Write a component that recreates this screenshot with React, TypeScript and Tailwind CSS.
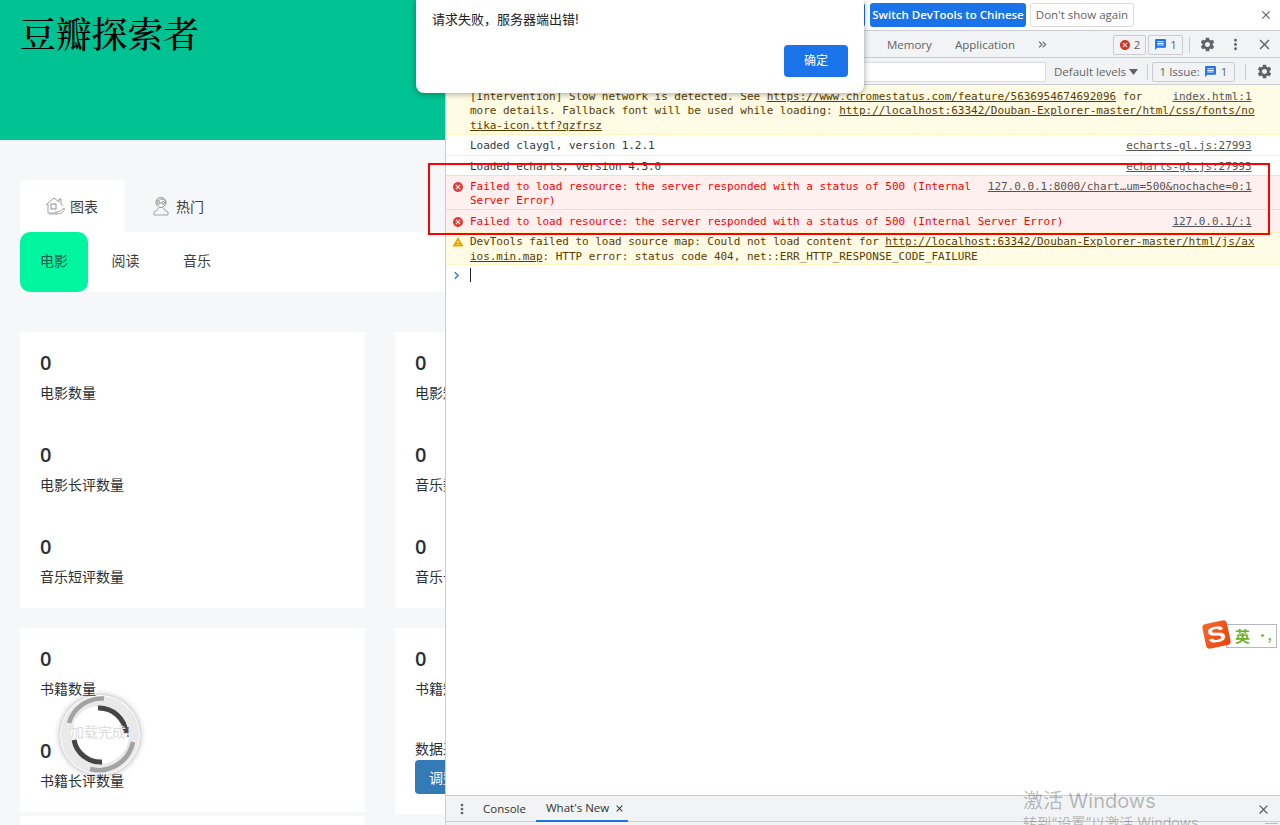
import React from "react";
import { MdSettings, MdMoreVert, MdClose, MdMessage, MdCancel, MdWarning, MdChevronRight, MdKeyboardDoubleArrowRight } from "react-icons/md";

function Stat({ label, className = "" }: { label: string; className?: string }) {
  return (
    <div className={`h-[92px] ${className}`}>
      <div className="h-[30px] font-['Open_Sans',sans-serif] text-[20px] leading-[30px] font-semibold text-[#2b2f36]">0</div>
      <div className="mt-[5px] h-[20px] text-[14px] leading-[20px] text-[#2b2f36] whitespace-nowrap">{label}</div>
    </div>
  );
}

function Line({ icon, children, right }: { icon?: React.ReactNode; children: React.ReactNode; right?: React.ReactNode }) {
  return (
    <div className="flex h-[14.5px] items-center leading-[14.5px] whitespace-pre">
      <div className="flex w-[24px] shrink-0 pl-[6px]">{icon}</div>
      <div className="flex-1 overflow-visible">{children}</div>
      {right && <a className="shrink-0 underline text-[#545454]">{right}</a>}
    </div>
  );
}

function HouseIcon() {
  return (
    <svg width="22" height="20" viewBox="0 0 22 20" fill="none" strokeWidth="1" className="shrink-0">
      <path d="M2 9 L10 2 L15 6 V3 H17 V8 L19 10" stroke="#a89a88" />
      <path d="M4 8 V17 H14" stroke="#9aa3ad" />
      <rect x="7" y="8" width="5" height="5" stroke="#8a8f96" />
      <path d="M11 16 C14 16 18 15 20 12 C21 15 18 18 13 18 H5" stroke="#b8a48e" />
    </svg>
  );
}

function PersonIcon() {
  return (
    <svg width="18" height="20" viewBox="0 0 18 20" fill="none" strokeWidth="1" className="shrink-0">
      <circle cx="9" cy="6.5" r="5" stroke="#8f949a" />
      <path d="M4 5 C7 5 8 3 10 3 C12 3 14 5 14 7" stroke="#a8977f" />
      <circle cx="6.8" cy="7" r="1.4" stroke="#8f949a" />
      <circle cx="11.2" cy="7" r="1.4" stroke="#8f949a" />
      <path d="M6 12 V13.5 L2 16 V19 H16 V16 L12 13.5 V12" stroke="#9aa3ad" />
    </svg>
  );
}

function Spinner() {
  return (
    <div className="absolute left-[60px] top-[695px] h-[80px] w-[80px] rounded-full shadow-[0_0_6px_rgba(0,0,0,0.35)]">
      <svg width="80" height="80" viewBox="0 0 80 80" fill="none" className="absolute inset-0">
        <circle cx="40" cy="40" r="34" stroke="#e9e9e9" strokeWidth="10" fill="#fff" />
        <path d="M9 28 A34 34 0 0 1 44 3.5" stroke="#a3a3a3" strokeWidth="4.5" />
        <path d="M73 47 A35 35 0 0 1 30 74" stroke="#a3a3a3" strokeWidth="4.5" />
        <path d="M38 13 A27 27 0 0 1 66 38" stroke="#444" strokeWidth="5" />
        <path d="M14 45 A27 27 0 0 0 42 67" stroke="#444" strokeWidth="5" />
      </svg>
      <div className="absolute left-[10px] top-[27px] text-[14px] leading-[20px] whitespace-nowrap text-[#dcdcdc]">
        加载完成<span className="text-[#555]">!</span>
      </div>
    </div>
  );
}

export default function App() {
  return (
    <div className="relative flex h-[825px] w-[1280px] overflow-hidden bg-white font-['Open_Sans','Noto_Sans_CJK_SC',sans-serif]">
      {/* Page */}
      <div className="h-[825px] w-[445px] shrink-0 overflow-hidden bg-[#f6f7f9] font-['Inter','Noto_Sans_CJK_SC',sans-serif]">
        <div className="h-[140px] bg-[#00c292] pl-[20px] pt-[7px]">
          <h1 className="text-[35.8px] leading-[52px] font-medium text-black whitespace-nowrap font-['Noto_Serif_CJK_SC','Noto_Sans_CJK_SC',serif]">豆瓣探索者</h1>
        </div>
        <div className="w-[770px] pl-[20px] pt-[40px]">
          <div className="flex h-[52px] text-[14px] text-[#3b3f45]">
            <div className="flex w-[105px] items-center gap-[4px] rounded-t-[4px] bg-white pl-[24px]">
              <HouseIcon />
              <span>图表</span>
            </div>
            <div className="flex w-[105px] items-center gap-[6px] pl-[27px]">
              <PersonIcon />
              <span>热门</span>
            </div>
          </div>
          <div className="flex h-[60px] w-[425px] items-center bg-white text-[14px] text-[#3b3f45]">
            <div className="flex h-[60px] w-[68px] items-center justify-center rounded-[10px] bg-[#00f5a0] pb-[3px] text-[#1f5c48]">电影</div>
            <div className="flex w-[75px] justify-center pb-[3px]">阅读</div>
            <div className="flex w-[68px] justify-center pb-[3px]">音乐</div>
          </div>
          <div className="mt-[40px] grid grid-cols-[345px_345px] gap-x-[30px]">
            <div className="h-[276px] bg-white px-[20px] pt-[16px]">
              <Stat label="电影数量" />
              <Stat label="电影长评数量" />
              <Stat label="音乐短评数量" />
            </div>
            <div className="h-[276px] bg-white px-[20px] pt-[16px]">
              <Stat label="电影短评数量" />
              <Stat label="音乐数量" />
              <Stat label="音乐长评数量" />
            </div>
            <div className="mt-[20px] h-[184px] bg-white px-[20px] pt-[16px]">
              <Stat label="书籍数量" />
              <Stat label="书籍长评数量" />
            </div>
            <div className="mt-[20px] h-[186px] bg-white px-[20px] pt-[16px]">
              <Stat label="书籍短评数量" className="h-[95px]" />
              <div className="h-[20px] text-[14px] leading-[20px] text-[#2b2f36] whitespace-nowrap">数据采集完成</div>
              <div className="mt-[1px] flex h-[34px] w-[80px] items-center rounded-[4px] bg-[#337ab7] pl-[14px] text-[14px] text-white">调整</div>
            </div>
            <div className="mt-[2px] h-[40px] bg-white" />
          </div>
        </div>
      </div>

      {/* DevTools */}
      <div className="flex h-[825px] flex-1 flex-col border-l border-[#c9ccd1] bg-white text-[11.5px] text-[#5f6368]">
        <div className="flex h-[31px] shrink-0 items-center border-b border-[#cbcdd1] bg-white">
          <div className="ml-[150px] h-[24px] w-[269px] rounded-[3px] bg-[#1a73e8]" />
          <div className="ml-[5px] flex h-[24px] w-[156px] items-center justify-center rounded-[3px] bg-[#1a73e8] font-semibold text-white whitespace-nowrap">Switch DevTools to Chinese</div>
          <div className="ml-[4px] flex h-[24px] w-[104px] items-center justify-center rounded-[3px] border border-[#dadce0] text-[#5f6368] whitespace-nowrap">Don't show again</div>
          <MdClose className="ml-[125px] text-[#5f6368]" size={14} />
        </div>
        <div className="flex h-[27px] shrink-0 items-center border-b border-[#cbcdd1] bg-[#f1f3f4] pt-[1px]">
          <span className="ml-[441px] w-[45px]">Memory</span>
          <span className="ml-[23px] w-[61px] whitespace-nowrap">Application</span>
          <MdKeyboardDoubleArrowRight className="ml-[20px]" size={13} />
          <div className="ml-[64px] flex h-[20px] w-[33px] items-center justify-center gap-[3px] border border-[#c9ccd1] rounded-[2px]">
            <MdCancel className="text-[#d93025]" size={12} />
            <span>2</span>
          </div>
          <div className="ml-[2px] flex h-[20px] w-[35px] items-center justify-center gap-[3px] border border-[#c9ccd1] rounded-[2px]">
            <MdMessage className="text-[#1a73e8]" size={13} />
            <span>1</span>
          </div>
          <div className="ml-[6px] h-[16px] w-px bg-[#c9ccd1]" />
          <MdSettings className="ml-[9px]" size={17} />
          <MdMoreVert className="ml-[11px]" size={17} />
          <MdClose className="ml-[12px]" size={17} />
        </div>
        <div className="flex h-[27px] shrink-0 items-center border-b border-[#cbcdd1] bg-[#f1f3f4] pt-[1px]">
          <div className="h-[20px] w-[600px] border border-[#dadce0] bg-white" />
          <span className="ml-[8px] w-[71px] whitespace-nowrap">Default levels</span>
          <svg width="9" height="6" viewBox="0 0 9 6" className="ml-[4px] shrink-0"><path d="M0 0 H9 L4.5 6 Z" fill="#5f6368" /></svg>
          <div className="ml-[9px] h-[16px] w-px bg-[#c9ccd1]" />
          <div className="ml-[4px] flex h-[20px] w-[83px] items-center justify-center gap-[4px] border border-[#c9ccd1] rounded-[2px] whitespace-nowrap">
            <span>1 Issue:</span>
            <MdMessage className="text-[#1a73e8]" size={13} />
            <span>1</span>
          </div>
          <div className="ml-[10px] h-[16px] w-px bg-[#c9ccd1]" />
          <MdSettings className="ml-[10px]" size={17} />
        </div>

        <div className="flex-1 overflow-hidden font-['DejaVu_Sans_Mono',monospace] text-[11px] tracking-[-0.03px] text-[#303942]">
          <div className="relative flex h-[50px] flex-col justify-center border-b border-[#fff5c2] bg-[#fffbe5] pr-[29px] pt-[4px] text-[#5c3c00]">
            <Line right={<span className="mr-[3px]">index.html:1</span>}>
              <span>[Intervention] Slow network is detected. See <u>https://www.chromestatus.com/feature/5636954674692096</u> for</span>
            </Line>
            <Line>
              <span>more details. Fallback font will be used while loading: <u>http://localhost:63342/Douban-Explorer-master/html/css/fonts/no</u></span>
            </Line>
            <Line>
              <u>tika-icon.ttf?qzfrsz</u>
            </Line>
            <div className="absolute left-0 right-0 top-0 h-[6px] bg-[#fffbe5]" />
          </div>
          <div className="flex h-[21px] flex-col justify-center border-b border-[#f0f0f0] pr-[32px] pt-[2px]">
            <Line right="echarts-gl.js:27993">Loaded claygl, version 1.2.1</Line>
          </div>
          <div className="flex h-[19px] flex-col justify-center pr-[32px] pt-[4px]">
            <Line right="echarts-gl.js:27993">Loaded echarts, version 4.3.0</Line>
          </div>
          <div className="flex h-[35px] flex-col justify-center border-y border-[#ffd6d6] bg-[#fff0f0] pr-[32px] pt-[3px] text-[#ff0000]">
            <Line icon={<MdCancel className="text-[#e0403a]" size={12} />} right="127.0.0.1:8000/chart…um=500&nochache=0:1">
              Failed to load resource: the server responded with a status of 500 (Internal
            </Line>
            <Line>Server Error)</Line>
          </div>
          <div className="flex h-[22px] flex-col justify-center bg-[#fff0f0] pr-[32px] pt-[2px] text-[#ff0000]">
            <Line icon={<MdCancel className="text-[#e0403a]" size={12} />} right="127.0.0.1/:1">
              Failed to load resource: the server responded with a status of 500 (Internal Server Error)
            </Line>
          </div>
          <div className="flex h-[33px] flex-col justify-center border-y border-[#fff5c2] bg-[#fffbe5] pr-[29px] pt-[2px] text-[#5c3c00]">
            <Line icon={<MdWarning className="text-[#e6a700]" size={12} />}>
              <span>DevTools failed to load source map: Could not load content for <u>http://localhost:63342/Douban-Explorer-master/html/js/ax</u></span>
            </Line>
            <Line>
              <span><u>ios.min.map</u>: HTTP error: status code 404, net::ERR_HTTP_RESPONSE_CODE_FAILURE</span>
            </Line>
          </div>
          <div className="flex h-[20px] items-center">
            <MdChevronRight className="ml-[3px] text-[#1a73e8]" size={15} />
            <div className="ml-[6px] h-[14px] w-px bg-[#202124]" />
          </div>
        </div>

        <div className="flex h-[27px] shrink-0 items-center border-y border-[#cbcdd1] bg-[#f1f3f4] pt-[1px] text-[#333]">
          <MdMoreVert className="ml-[8px] text-[#5f6368]" size={16} />
          <span className="ml-[13px] w-[43px]">Console</span>
          <div className="ml-[10px] flex h-[25px] w-[92px] items-center gap-[5px] border-b-2 border-[#1a73e8] pl-[10px]">
            <span className="whitespace-nowrap">What's New</span>
            <MdClose size={11} />
          </div>
          <MdClose className="ml-[628px] text-[#5f6368]" size={15} />
        </div>
        <div className="relative h-[3px] shrink-0 bg-[#f1f3f4]">
          <div className="absolute left-[819px] top-[1px] h-px w-[13px] bg-[#b9bcc0]" />
        </div>
      </div>

      {/* Overlays */}
      <div className="absolute left-[416px] top-0 h-[93px] w-[448px] rounded-b-[8px] bg-white shadow-[0_1px_6px_rgba(0,0,0,0.35)]">
        <div className="absolute left-[16px] top-[9px] text-[13px] leading-[20px] text-[#202124] font-['Inter','Noto_Sans_CJK_SC',sans-serif]">请求失败，服务器端出错!</div>
        <div className="absolute left-[368px] top-[45px] flex h-[32px] w-[64px] items-center justify-center rounded-[4px] bg-[#1a73e8] text-[12px] text-white font-['Inter','Noto_Sans_CJK_SC',sans-serif]">确定</div>
      </div>

      <div className="absolute left-[428px] top-[163px] h-[72px] w-[842px] border-2 border-[#ff0000]" />

      <Spinner />

      <div className="absolute left-[1226px] top-[624px] flex h-[24px] w-[51px] items-center border border-[#b5b8c0] bg-white pl-[8px] font-['Noto_Sans_CJK_SC',sans-serif] text-[15px] font-bold text-[#6cb31e]">
        <span>英</span>
        <span className="ml-[7px] -mt-[2px] text-[11px]">•,</span>
      </div>
      <div className="absolute left-[1204px] top-[622px] flex h-[25px] w-[25px] -rotate-12 items-center justify-center rounded-[4px] bg-gradient-to-br from-[#f7682a] to-[#e8400f] font-['Liberation_Sans',sans-serif] text-[22px] font-bold text-white">
        <span className="scale-x-125">S</span>
      </div>

      <div className="pointer-events-none absolute left-[1023px] top-[788px] whitespace-nowrap text-[20px] leading-[27px] text-[rgba(0,0,0,0.27)] font-['Inter','Noto_Sans_CJK_SC',sans-serif]">激活 Windows</div>
      <div className="pointer-events-none absolute left-[1023px] top-[813px] whitespace-nowrap text-[14px] leading-[20px] text-[rgba(0,0,0,0.27)] font-['Inter','Noto_Sans_CJK_SC',sans-serif]">转到“设置”以激活 Windows。</div>
    </div>
  );
}
